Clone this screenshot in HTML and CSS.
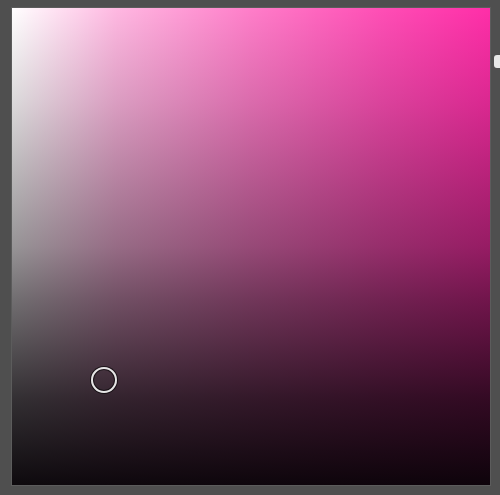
FILE: index.html
```html
<!DOCTYPE html>
<html>
<head>
<meta charset="utf-8">
<link rel="stylesheet" href="styles.css">
</head>
<body>
<div class="stage">
  <div class="picker">
    <div class="sat">
      <div class="val">
        <span class="cursor"></span>
      </div>
    </div>
  </div>
  <span class="hue-handle"></span>
</div>
</body>
</html>
```
FILE: styles.css
```css
html, body {
  margin: 0;
  padding: 0;
  background: #4f4f4f;
  width: 500px;
  height: 495px;
  overflow: hidden;
}
.stage {
  position: relative;
  width: 500px;
  height: 495px;
  padding: 8px 0 0 12px;
  box-sizing: border-box;
}
.picker {
  width: 478px;
  height: 477px;
  background: #ff2ea8;
  box-shadow: 0 0 0 1px #5c5c5c;
}
.sat {
  width: 100%;
  height: 100%;
  background: linear-gradient(to right,
    rgba(255,255,255,1) 0%,
    rgba(255,255,255,0.66) 22%,
    rgba(255,255,255,0.38) 50%,
    rgba(255,255,255,0.15) 78%,
    rgba(255,255,255,0) 100%);
}
.val {
  position: relative;
  width: 100%;
  height: 100%;
  background: linear-gradient(to bottom,
    rgba(6,2,6,0) 0%,
    rgba(6,2,6,0.14) 19%,
    rgba(6,2,6,0.42) 50%,
    rgba(6,2,6,0.57) 61%,
    rgba(6,2,6,0.82) 82%,
    rgba(6,2,6,0.97) 100%);
}
.cursor {
  position: absolute;
  left: 79px;
  top: 359px;
  width: 22px;
  height: 22px;
  border: 2px solid #e6e6e6;
  border-radius: 50%;
  box-shadow: 0 0 0 1px rgba(0,0,0,0.6), inset 0 0 0 1px rgba(0,0,0,0.6);
}
.hue-handle {
  position: absolute;
  left: 494px;
  top: 55px;
  width: 12px;
  height: 13px;
  border-radius: 3px;
  background: #e8e8e8;
}
```
